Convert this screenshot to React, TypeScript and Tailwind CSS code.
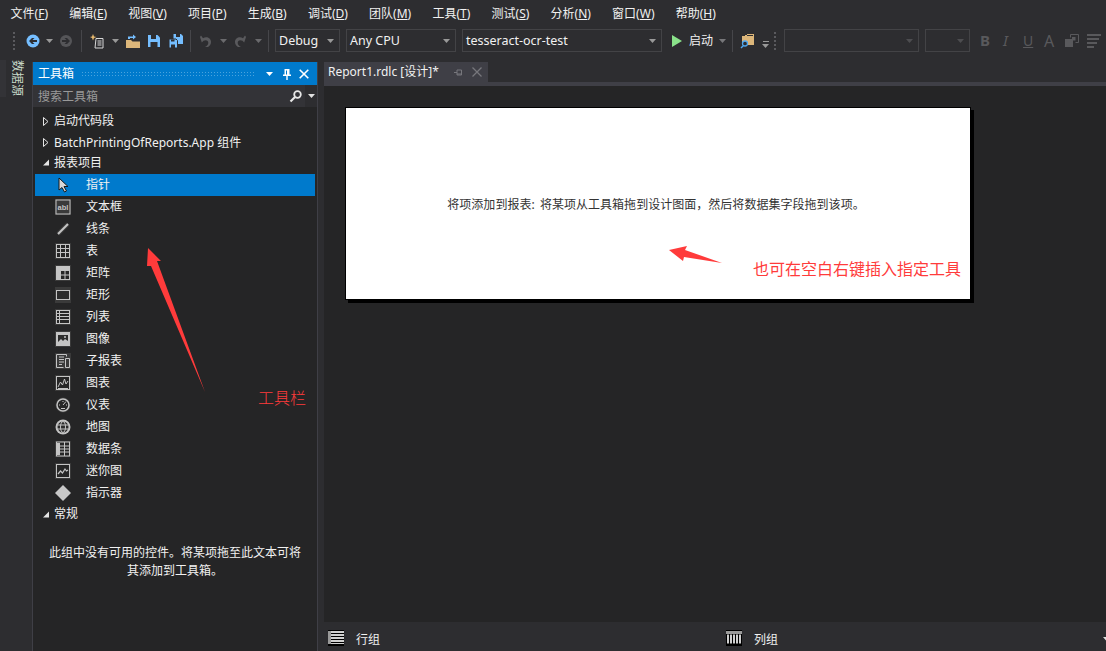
import type { ReactNode } from 'react'

const cjk = "font-['Noto_Sans','Noto_Sans_CJK_SC',sans-serif]"

const menus = [
  ['文件', 'F'],
  ['编辑', 'E'],
  ['视图', 'V'],
  ['项目', 'P'],
  ['生成', 'B'],
  ['调试', 'D'],
  ['团队', 'M'],
  ['工具', 'T'],
  ['测试', 'S'],
  ['分析', 'N'],
  ['窗口', 'W'],
  ['帮助', 'H'],
]

function Svg({ size = 16, children, className }: { size?: number; children: ReactNode; className?: string }) {
  return (
    <svg width={size} height={size} viewBox={`0 0 ${size} ${size}`} className={`shrink-0 ${className ?? ''}`}>
      {children}
    </svg>
  )
}

function Caret({ color = '#999999', className }: { color?: string; className?: string }) {
  return (
    <svg width="7" height="4" viewBox="0 0 7 4" className={`shrink-0 ${className ?? ''}`}>
      <path d="M0 0h7L3.5 4z" fill={color} />
    </svg>
  )
}

function Sep({ className }: { className?: string }) {
  return <div className={`h-[22px] w-px shrink-0 bg-[#46464a] ${className ?? ''}`} />
}

function Grip({ className }: { className?: string }) {
  return (
    <div
      className={`h-[19px] w-[5px] shrink-0 bg-[radial-gradient(#5a5a5e_1px,transparent_1px)] bg-[length:4px_4px] ${className ?? ''}`}
    />
  )
}

function Combo({ label, width, ml, disabled }: { label?: string; width: string; ml: string; disabled?: boolean }) {
  return (
    <div
      className={`flex h-[23px] shrink-0 items-center justify-between border border-[#434346] pl-[3px] pr-[5px] text-[12.5px] text-[#f1f1f1] ${width} ${ml}`}
    >
      <span className="pt-[2px]">{label}</span>
      <Caret color={disabled ? '#4d4d50' : '#999999'} />
    </div>
  )
}

function Toolbar() {
  return (
    <div className="flex h-[25px] shrink-0 items-center">
      <Grip className="ml-3" />
      <Svg size={14} className="ml-[9px]">
        <circle cx="7" cy="7" r="6.5" fill="#75beff" />
        <path d="M11 6H6.5l2-2H6L3 7l3 3h2.5l-2-2H11z" fill="#2d2d30" />
      </Svg>
      <Caret className="ml-[6px]" />
      <Svg size={14} className="ml-[6px]">
        <circle cx="7" cy="7" r="6" fill="#555558" />
        <path d="M3 6h4.5l-2-2H8l3 3-3 3H5.500l2-2H3z" fill="#2d2d30" />
      </Svg>
      <Sep className="ml-[8px]" />
      <Svg className="ml-[8px]">
        <path d="M6 5.500h7v9.500H5z" fill="none" stroke="#d8d8d8" />
        <path d="M7.500 8h4M7.500 10h4M7.500 12h4" stroke="#d8d8d8" />
        <path d="M3 1l1 2.500L6.500 4 4 5 3 7.500 2 5 0 4l2-.5z" fill="#e6b86e" />
      </Svg>
      <Caret className="ml-[6px]" />
      <Svg className="ml-[6px]">
        <path d="M1 7h5l1.500 1.500H15V15H1z" fill="#dcb67a" />
        <path d="M3 6V3.500h5V1.500l3 2.500-3 2.500V5H5v1z" fill="#75beff" />
      </Svg>
      <Svg size={14} className="ml-[6px]">
        <path d="M1 1h9.500L13 3.500V13H1z" fill="#75beff" />
        <path d="M4 1h5v4H4z" fill="#2d2d30" />
        <path d="M3.500 8h7v5h-7z" fill="#2d2d30" />
      </Svg>
      <Svg className="ml-[7px]">
        <path d="M5.500 1h7.500L15 3v8H5.500z" fill="#75beff" />
        <path d="M8 1h4v3H8z" fill="#2d2d30" />
        <path d="M1 6h7l1.500 1.500V15H1z" fill="#75beff" stroke="#2d2d30" />
        <path d="M3 6.500h3.500v2H3zM3 11.500h4V15H3z" fill="#2d2d30" />
      </Svg>
      <Sep className="ml-[6px]" />
      <Svg size={14} className="ml-[7px]">
        <path d="M2 3l1.800 5.500L5.500 6.800c2.500-1.500 5-.3 4.800 2.200-.1 1.600-1.300 3-3.300 4h3c2-1.400 3-3 3-5 0-4-4.500-6-8-3.800L3 1.500z" fill="#5a5a5d" />
      </Svg>
      <Caret className="ml-2" color="#6a6a6d" />
      <Svg size={14} className="ml-[7px]">
        <path d="M12 3l-1.800 5.500L8.500 6.800C6 5.300 3.500 6.500 3.700 9c.1 1.600 1.300 3 3.300 4H4C2 11.600 1 10 1 8c0-4 4.500-6 8-3.800L11 1.500z" fill="#5a5a5d" />
      </Svg>
      <Caret className="ml-[7px]" color="#6a6a6d" />
      <Sep className="ml-[6px]" />
      <Combo label="Debug" width="w-[65px]" ml="ml-[6px]" />
      <Combo label="Any CPU" width="w-[110px]" ml="ml-[6px]" />
      <Combo label="tesseract-ocr-test" width="w-[200px]" ml="ml-[6px]" />
      <svg width="10" height="12" viewBox="0 0 10 12" className="ml-[10px] shrink-0">
        <path d="M0 0l10 6-10 6z" fill="#8ae28a" />
      </svg>
      <span className="ml-[7px] whitespace-nowrap text-xs text-[#f1f1f1]">启动</span>
      <Caret className="ml-[6px]" color="#77777a" />
      <Sep className="ml-[6px]" />
      <Svg className="ml-[7px]">
        <path d="M5 2h2V1h7v11H5z" fill="#dcb67a" />
        <path d="M7 2h6v1H7z" fill="#2d2d30" />
        <path d="M2 3h6v9H2z" fill="#dcb67a" />
        <circle cx="5" cy="10.500" r="2.500" fill="#2d2d30" stroke="#4fa8f0" strokeWidth="1.300" />
        <path d="M3.500 12.500L1 15" stroke="#4fa8f0" strokeWidth="1.500" />
      </Svg>
      <div className="ml-[6px] mt-2 flex shrink-0 flex-col items-center gap-[2px]">
        <div className="h-px w-[6px] bg-[#999999]" />
        <Caret />
      </div>
      <Grip className="ml-[4px]" />
      <Combo width="w-[135px]" ml="ml-[6px]" disabled />
      <Combo width="w-[45px]" ml="ml-[6px]" disabled />
      <span className="ml-[10px] w-3 text-[15px] font-bold text-[#59595c]">B</span>
      <span className="ml-[11px] w-2 text-[15px] italic text-[#59595c]">I</span>
      <span className="ml-[12px] w-[11px] text-[14px] leading-4 text-[#59595c] underline">U</span>
      <span className="ml-[10px] w-[13px] text-[16px] leading-4 text-[#59595c]">A</span>
      <Svg size={14} className="ml-2">
        <path d="M5.500 .5h8v8h-3M5.500.5v3" fill="none" stroke="#59595c" />
        <path d="M7 3h3.500v3.500H7zM0 5h8v8H0z" fill="#59595c" />
      </Svg>
      <Svg size={14} className="ml-2">
        <path d="M0 1h14M0 5h12M0 9h10M0 13h7" stroke="#59595c" strokeWidth="2" />
      </Svg>
    </div>
  )
}

// icons sit on a dark tile, drawn in the light grey of the reporting toolbox
const ink = '#c4c4c4'
const tile = '#3a3a3a'

function Tile({ children }: { children: ReactNode }) {
  return (
    <Svg>
      <rect x="0" y="0" width="16" height="16" fill={tile} />
      {children}
    </Svg>
  )
}

const tools: { name: string; icon: ReactNode }[] = [
  {
    name: '指针',
    icon: (
      <Svg>
        <path d="M4 1l9 8.500H9l2.500 4.500-2 1L7 10.500 4 13z" fill="#d8d8d8" stroke="#1a1a1a" />
      </Svg>
    ),
  },
  {
    name: '文本框',
    icon: (
      <Tile>
        <rect x="1" y="1" width="14" height="14" fill="none" stroke={ink} />
        <text x="8" y="11" textAnchor="middle" fontSize="7.500" fontWeight="700" fill={ink} fontFamily="Liberation Sans">
          abl
        </text>
      </Tile>
    ),
  },
  {
    name: '线条',
    icon: (
      <Svg>
        <path d="M3 13L13 3" stroke="#3c3c3c" strokeWidth="4" />
        <path d="M3 13L13 3" stroke={ink} strokeWidth="2" />
      </Svg>
    ),
  },
  {
    name: '表',
    icon: (
      <Tile>
        <rect x="1.500" y="1.500" width="13" height="13" fill="#262626" stroke={ink} />
        <path d="M1.500 5.500h13M1.500 9.500h13M5.500 1.500v13M10.500 1.500v13" stroke={ink} />
      </Tile>
    ),
  },
  {
    name: '矩阵',
    icon: (
      <Tile>
        <rect x="1" y="1" width="14" height="14" fill={ink} />
        <rect x="6" y="6" width="8" height="8" fill="#262626" />
        <path d="M6 10h8M10 6v8" stroke={ink} />
      </Tile>
    ),
  },
  {
    name: '矩形',
    icon: (
      <Tile>
        <rect x="1.500" y="3.500" width="13" height="9" fill="#2c2c2c" stroke={ink} />
      </Tile>
    ),
  },
  {
    name: '列表',
    icon: (
      <Tile>
        <rect x="1.500" y="1.500" width="13" height="13" fill="#262626" stroke={ink} />
        <path d="M1.500 4.500h13M1.500 7.500h13M1.500 10.500h13M4.500 1.500v13" stroke={ink} />
      </Tile>
    ),
  },
  {
    name: '图像',
    icon: (
      <Tile>
        <rect x="1" y="1" width="14" height="14" fill={ink} />
        <rect x="3" y="4" width="10" height="8" fill="#2c2c2c" />
        <path d="M3 11l3-3 2 2 2-2 3 2v2H3z" fill={ink} />
        <circle cx="10" cy="6" r="1" fill={ink} />
      </Tile>
    ),
  },
  {
    name: '子报表',
    icon: (
      <Tile>
        <path d="M1.500 1.500h10v2M1.500 1.500v13h7M14.500 5.500v9h-4v-9z" fill="none" stroke={ink} />
        <path d="M4 4h5M4 6.500h5M4 9h5M4 11.500h3" stroke={ink} />
      </Tile>
    ),
  },
  {
    name: '图表',
    icon: (
      <Tile>
        <rect x="1.500" y="1.500" width="13" height="13" fill="#262626" stroke={ink} />
        <path d="M3 12l2.500-5 2 3 2-6 1.500 5 2-3" fill="none" stroke={ink} />
        <path d="M3 13.500h10" stroke={ink} />
      </Tile>
    ),
  },
  {
    name: '仪表',
    icon: (
      <Svg>
        <circle cx="8" cy="8" r="7.500" fill={tile} />
        <circle cx="8" cy="8" r="6" fill="#262626" stroke={ink} strokeWidth="1.500" />
        <path d="M8 8l3-3.500M4 8h1M11 8h1M8 4v1M6 11.500h4" stroke={ink} />
      </Svg>
    ),
  },
  {
    name: '地图',
    icon: (
      <Svg>
        <circle cx="8" cy="8" r="7.500" fill={ink} />
        <circle cx="8" cy="8" r="5.500" fill="#2c2c2c" />
        <ellipse cx="8" cy="8" rx="2.500" ry="5.500" fill="none" stroke={ink} />
        <path d="M2.500 6h11M2.500 10h11" stroke={ink} />
      </Svg>
    ),
  },
  {
    name: '数据条',
    icon: (
      <Tile>
        <rect x="1.500" y="1" width="13" height="14" fill="#262626" stroke={ink} />
        <rect x="2" y="2" width="3" height="12" fill={ink} />
        <path d="M2 5h12M2 8h12M2 11h12M9.500 1v14" stroke={ink} />
      </Tile>
    ),
  },
  {
    name: '迷你图',
    icon: (
      <Tile>
        <rect x="1.500" y="1.500" width="13" height="13" fill="#262626" stroke={ink} />
        <path d="M3 11l2.500-3 2 2 2.500-4 1.500 2 1.500-1" fill="none" stroke={ink} strokeWidth="1.200" />
      </Tile>
    ),
  },
  {
    name: '指示器',
    icon: (
      <Svg>
        <path d="M8 0l8 8-8 8-8-8z" fill="#c8c8c8" />
      </Svg>
    ),
  },
]

function Expander({ open }: { open?: boolean }) {
  return (
    <svg width="6" height="9" viewBox="0 0 6 9" className="ml-[10px] shrink-0">
      {open ? (
        <path d="M0 7.500L6 1.500v6z" fill="#e6e6e6" />
      ) : (
        <path d="M.5.500L5 4.500.500 8.500z" fill="none" stroke="#e6e6e6" />
      )}
    </svg>
  )
}

function Category({ label, open, h = 'h-[22px]' }: { label: string; open?: boolean; h?: string }) {
  return (
    <div className={`flex items-center ${h}`}>
      <Expander open={open} />
      <span className="ml-[5px] text-xs text-[#f1f1f1]">{label}</span>
    </div>
  )
}

function Toolbox() {
  return (
    <aside className="flex w-[286px] shrink-0 flex-col border-x border-[#3f3f46] bg-[#252526]">
      <div className="flex h-[23px] shrink-0 items-center bg-[#007acc] pl-[5px] text-xs text-white">
        <span>工具箱</span>
        <div className="ml-[7px] h-[5px] w-[175px] bg-[radial-gradient(#4aa3de_1px,transparent_1px)] bg-[length:3px_3px]" />
        <Caret color="#ffffff" className="ml-[10px]" />
        <svg width="8" height="12" viewBox="0 0 8 12" className="ml-[10px]">
          <path d="M1.500 1h5v5.500H8V8H4.700v4h-1.400V8H0V6.500h1.500zM3 2.500v4h1v-4z" fill="#ffffff" />
        </svg>
        <svg width="10" height="10" viewBox="0 0 10 10" className="ml-[8px]">
          <path d="M.7.700l8.600 8.600M9.300.700L.7 9.300" stroke="#ffffff" strokeWidth="1.600" />
        </svg>
      </div>
      <div className="flex h-[22px] shrink-0 items-center justify-between bg-[#333337] pl-[5px] text-xs text-[#999999]">
        <span className="pt-[1px]">搜索工具箱</span>
        <div className="flex h-full items-center">
          <svg width="13" height="13" viewBox="0 0 13 13">
            <circle cx="8.500" cy="4.500" r="3.300" fill="none" stroke="#e8e8e8" strokeWidth="1.800" />
            <path d="M6 7L1.500 11.500" stroke="#e8e8e8" strokeWidth="2.200" />
          </svg>
          <div className="ml-[3px] flex h-full w-[12px] items-center justify-center bg-[#2d2d30]">
            <Caret color="#e0e0e0" />
          </div>
        </div>
      </div>
      <div className="flex-1 pt-[3px]">
        <Category label="启动代码段" />
        <Category label="BatchPrintingOfReports.App 组件" h="h-[21px]" />
        <Category label="报表项目" open h="h-[19px]" />
        <div className="mt-[2px] px-[2px]">
          {tools.map((tool, i) => (
            <div key={tool.name} className={`flex h-[22px] items-center pl-[20px] ${i === 0 ? 'bg-[#007acc]' : ''}`}>
              {tool.icon}
              <span className="ml-[15px] text-xs text-[#f1f1f1]">{tool.name}</span>
            </div>
          ))}
        </div>
        <Category label="常规" open h="h-[20px]" />
        <p className="mt-[20px] px-[12px] text-center text-xs leading-[18px] text-[#f1f1f1]">
          此组中没有可用的控件。将某项拖至此文本可将其添加到工具箱。
        </p>
      </div>
    </aside>
  )
}

function GroupIcon({ columns }: { columns?: boolean }) {
  return (
    <svg width="16" height="16" viewBox="0 0 16 16" className="shrink-0">
      <rect width="16" height="16" fill="#000000" />
      {columns ? (
        <>
          <rect y="1" width="16" height="3" fill="#999999" />
          <path d="M1 4.500h14v9H1z" fill="#d0d0d0" />
          <path d="M3.500 4v10M6.500 4v10M9.500 4v10M12.500 4v10" stroke="#000000" />
        </>
      ) : (
        <>
          <rect y="1" width="3" height="13" fill="#999999" />
          <path d="M3 1h13v13H3z" fill="#d0d0d0" />
          <path d="M3 3.500h13M3 6.500h13M3 9.500h13M3 12.500h13" stroke="#000000" />
        </>
      )}
    </svg>
  )
}

function Designer() {
  return (
    <section className="flex min-w-0 flex-1 flex-col">
      <div className="flex h-[20px] shrink-0">
        <div className="flex w-[164px] items-center bg-[#3f3f46] pl-[4px] text-xs text-[#f1f1f1]">
          <span>Report1.rdlc [设计]*</span>
          <svg width="9" height="9" viewBox="0 0 9 9" className="ml-[15px]">
            <path d="M0 4.500h3M3 2v5h4.500V2zM3 6h4.500" fill="none" stroke="#77777c" />
          </svg>
          <svg width="10" height="10" viewBox="0 0 10 10" className="ml-[9px]">
            <path d="M.5.500l9 9M9.500.500l-9 9" stroke="#77777c" strokeWidth="1.300" />
          </svg>
        </div>
      </div>
      <div className="h-[4px] shrink-0 bg-[#3f3f46]" />
      <div className="flex-1 bg-[#252526] pl-[21px] pt-[21px]">
        <div className="flex h-[193px] w-[626px] items-center justify-center border border-black bg-white pr-[4px] pt-[3px] text-xs tracking-[0.03px] text-[#333333] shadow-[3px_3px_0_0_#000000] [word-spacing:2px]">
          将项添加到报表: 将某项从工具箱拖到设计图面，然后将数据集字段拖到该项。
        </div>
      </div>
      <div className="flex h-[29px] shrink-0 items-center pt-[2px] text-xs text-[#f1f1f1]">
        <div className="flex w-[402px] items-center pl-[4px]">
          <GroupIcon />
          <span className="ml-[12px] mt-[4px]">行组</span>
        </div>
        <GroupIcon columns />
        <span className="ml-[12px] mt-[4px]">列组</span>
        <Caret color="#e0e0e0" className="ml-auto mr-[-4px] mt-[2px]" />
      </div>
    </section>
  )
}

export default function App() {
  return (
    <div className={`relative flex h-[651px] w-[1106px] flex-col overflow-hidden bg-[#2d2d30] ${cjk}`}>
      <nav className="flex h-[28px] shrink-0 items-center text-xs text-[#f1f1f1]">
        {menus.map(([label, key]) => (
          <span key={key} className="px-[10.6px]">
            {label}(<span className="underline">{key}</span>)
          </span>
        ))}
      </nav>
      <Toolbar />
      <div className="mt-[9px] flex min-h-0 flex-1">
        <div className="-mt-[2px] flex w-[32px] shrink-0 items-start">
          <div className="h-[37px] w-[6px] bg-[#333337]" />
          <span className="ml-[5px] h-[37px] text-xs leading-[13px] text-[#c8d8c8] [text-orientation:sideways] [writing-mode:vertical-rl]">
            数据源
          </span>
        </div>
        <Toolbox />
        <div className="w-[6px] shrink-0" />
        <Designer />
      </div>

      {/* red notes pasted on the screenshot */}
      <svg width="1106" height="651" viewBox="0 0 1106 651" className="pointer-events-none absolute left-0 top-0">
        <polygon points="148,248 161,261 157,261 205,392 151,266 147,266" fill="#ff3b3b" />
        <polygon points="669,250 687,246 685,250 722,263 684,257 683,261" fill="#ff3b3b" />
      </svg>
      <span className="absolute left-[753px] top-[257px] text-base leading-6 text-[#ff3b3b]">
        也可在空白右键插入指定工具
      </span>
      <span className="absolute left-[258px] top-[386px] text-base font-light leading-6 text-[#ff3b3b]">工具栏</span>
    </div>
  )
}
